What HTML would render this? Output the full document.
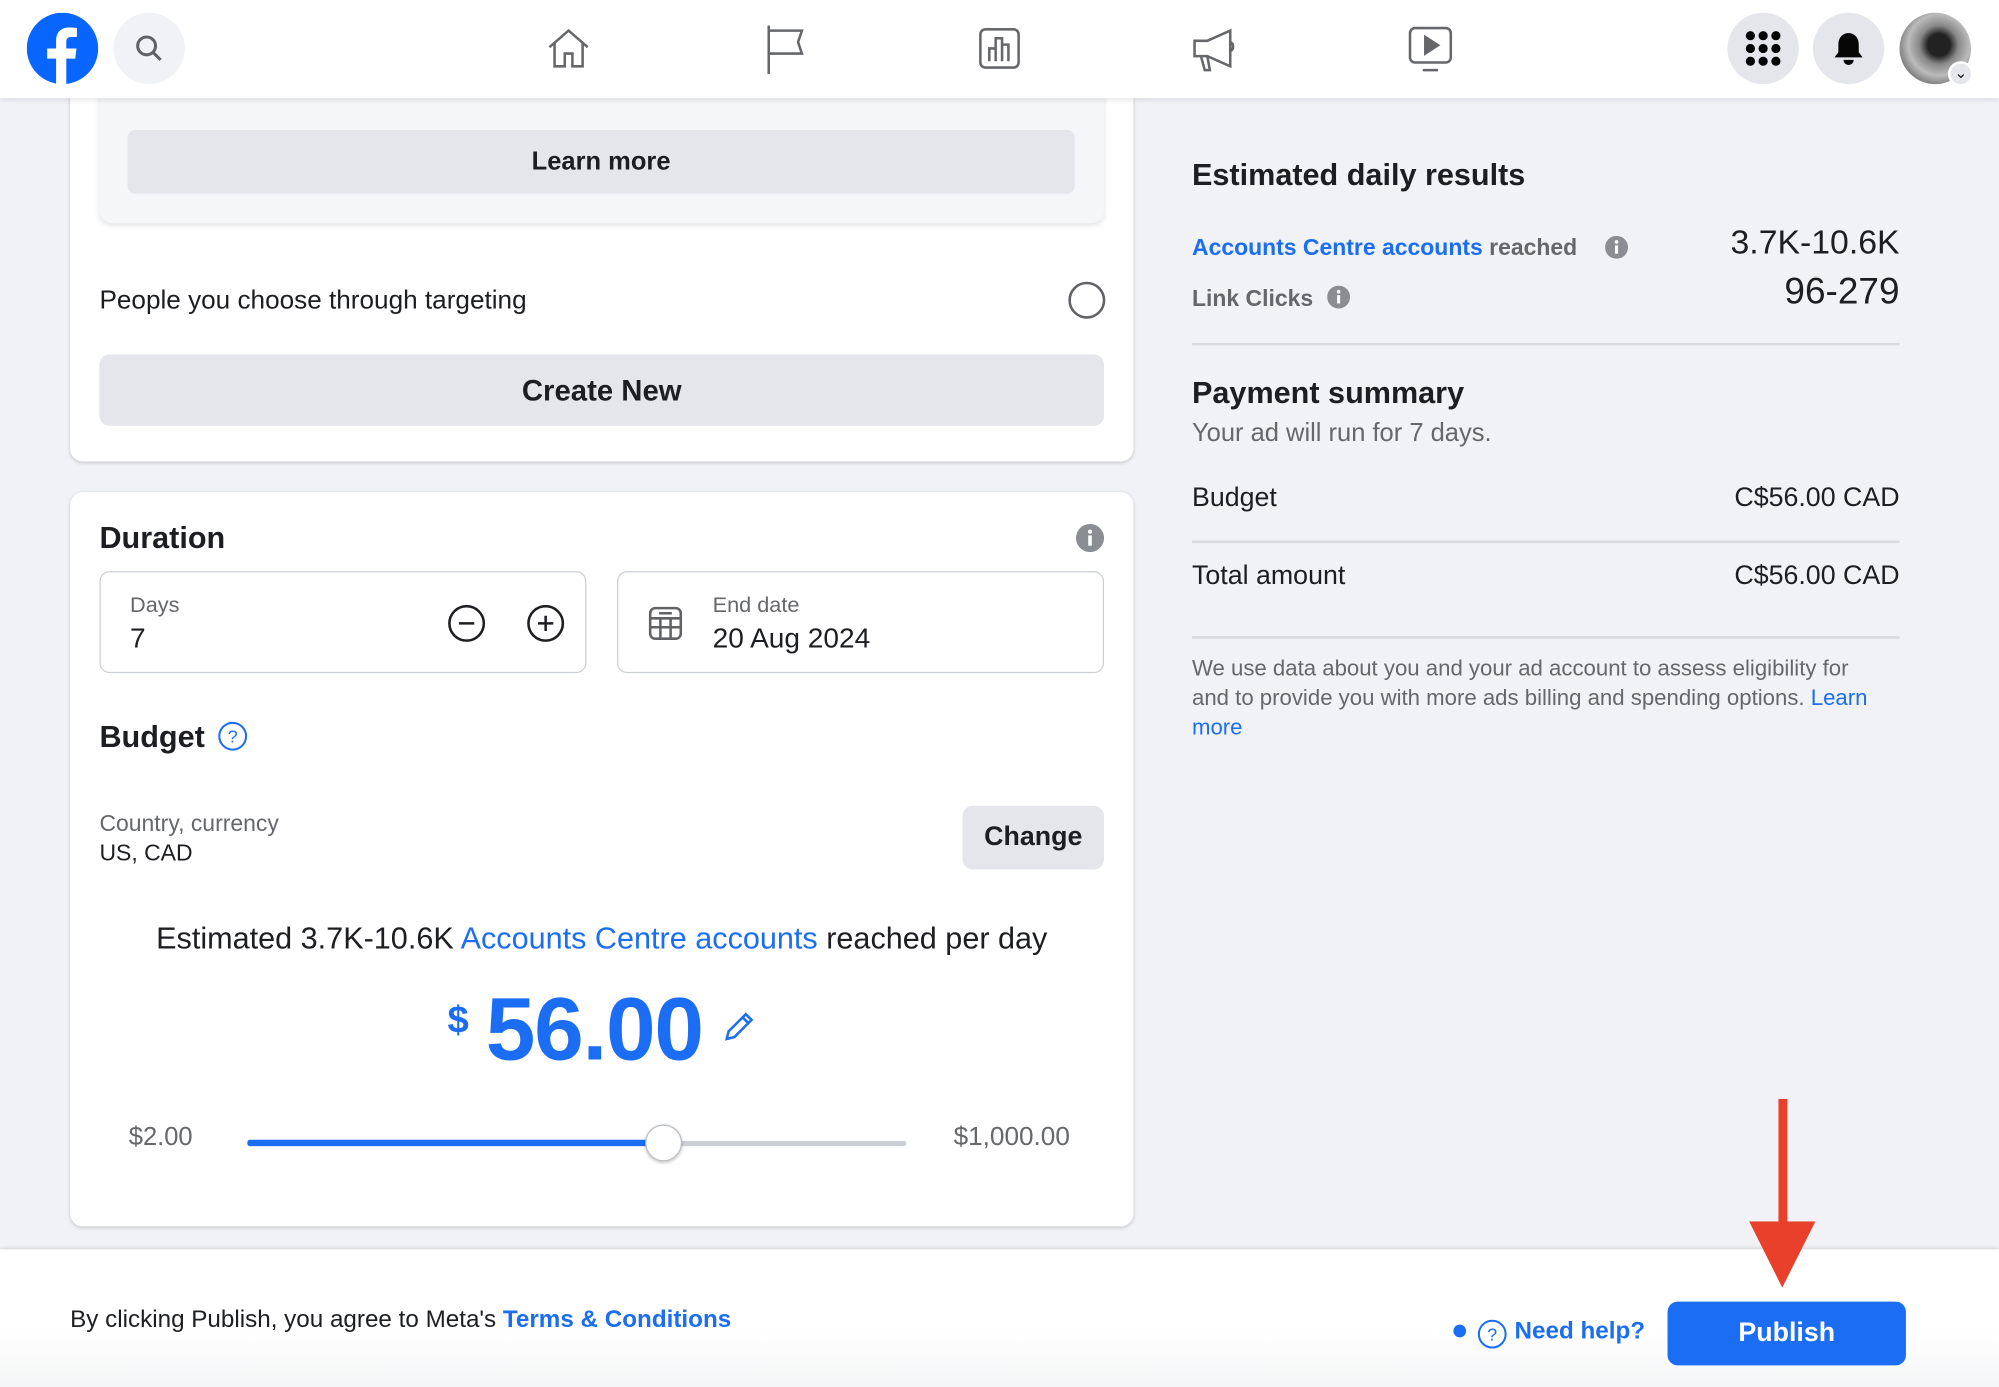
<!DOCTYPE html>
<html><head><meta charset="utf-8"><style>
*{box-sizing:border-box;margin:0;padding:0}
html,body{width:1999px;height:1387px;overflow:hidden;background:#f0f2f5;font-family:"Liberation Sans",Arial,sans-serif;color:#1c1e21}
#w{position:absolute;left:0;top:0;width:1568px;height:1088px;transform:scale(1.27487);transform-origin:0 0;background:#f0f2f5}
.a{position:absolute}
.t{position:absolute;white-space:nowrap;line-height:1}
.btn{position:absolute;background:#e4e6eb;border-radius:8px;display:flex;align-items:center;justify-content:center;font-weight:bold;color:#1c1e21}
.blue{color:#1b6ef3}
.g{color:#65676b}
.hr{position:absolute;left:935px;width:555px;height:2px;background:#d8dadf}
</style></head><body><div id="w">

<div class="a" style="left:55px;top:40px;width:834px;height:322px;background:#fff;border-radius:10px;box-shadow:0 1px 3px rgba(0,0,0,.18)"></div>
<div class="a" style="left:78px;top:40px;width:788px;height:135px;background:#f5f6f8;border-radius:0 0 10px 10px;box-shadow:0 2px 4px rgba(0,0,0,.1)"></div>
<div class="btn" style="left:100px;top:102px;width:743px;height:50px;font-size:20px;border-radius:6px">Learn more</div>
<div class="t" style="left:78px;top:226px;font-size:20.5px">People you choose through targeting</div>
<div class="a" style="left:838px;top:221px;width:29px;height:29px;border:2px solid #606266;border-radius:50%"></div>
<div class="btn" style="left:78px;top:278px;width:788px;height:56px;font-size:23px">Create New</div>

<div class="a" style="left:55px;top:386px;width:834px;height:576px;background:#fff;border-radius:10px;box-shadow:0 1px 3px rgba(0,0,0,.18)"></div>
<div class="t" style="left:78px;top:411px;font-size:24px;font-weight:bold">Duration</div>
<svg class="a" style="left:844px;top:411px" width="22" height="22"><circle cx="11" cy="11" r="11" fill="#8a8d91"/><rect x="9.6" y="9" width="2.8" height="8" fill="#fff"/><circle cx="11" cy="6" r="1.6" fill="#fff"/></svg>
<div class="a" style="left:78px;top:448px;width:382px;height:80px;border:1.5px solid #ccd0d5;border-radius:8px"></div>
<div class="t g" style="left:102px;top:466px;font-size:17px">Days</div>
<div class="t" style="left:102px;top:490px;font-size:22px">7</div>
<svg class="a" style="left:351px;top:474px" width="30" height="30" fill="none" stroke="#1c1e21" stroke-width="2"><circle cx="15" cy="15" r="13.5"/><path d="M9 15h12"/></svg>
<svg class="a" style="left:413px;top:474px" width="30" height="30" fill="none" stroke="#1c1e21" stroke-width="2"><circle cx="15" cy="15" r="13.5"/><path d="M9 15h12M15 9v12"/></svg>
<div class="a" style="left:484px;top:448px;width:382px;height:80px;border:1.5px solid #ccd0d5;border-radius:8px"></div>
<svg class="a" style="left:508px;top:475px" width="28" height="28" fill="none" stroke="#606266" stroke-width="2"><rect x="2" y="2" width="24" height="24" rx="4"/><path d="M2 10h24M2 17h24M10 10v16M18 10v16M9 6h10"/></svg>
<div class="t g" style="left:559px;top:466px;font-size:17px">End date</div>
<div class="t" style="left:559px;top:490px;font-size:22px">20 Aug 2024</div>

<div class="t" style="left:78px;top:567px;font-size:24px;font-weight:bold">Budget</div>
<svg class="a" style="left:171px;top:566px" width="23" height="23" fill="none" stroke="#1b6ef3" stroke-width="1.6"><circle cx="11.5" cy="11.5" r="10.5"/><text x="11.5" y="16.5" text-anchor="middle" font-size="14" fill="#1b6ef3" stroke="none" font-family="Liberation Sans">?</text></svg>
<div class="t g" style="left:78px;top:637px;font-size:18px">Country, currency</div>
<div class="t" style="left:78px;top:660px;font-size:18px">US, CAD</div>
<div class="btn" style="left:755px;top:632px;width:111px;height:50px;font-size:21px">Change</div>

<div class="t" style="left:472px;top:725px;font-size:24px;transform:translateX(-50%)">Estimated 3.7K-10.6K <span class="blue">Accounts Centre accounts</span> reached per day</div>
<div class="t blue" style="left:351px;top:786px;font-size:30px;font-weight:bold">$</div>
<div class="t blue" style="left:381px;top:772px;font-size:70px;font-weight:bold;letter-spacing:-1px">56.00</div>
<svg class="a" style="left:566px;top:791px" width="28" height="28" fill="none" stroke="#1b6ef3" stroke-width="2"><path d="M4 24l1.5-6L19 4.5l4.5 4.5L10 22.5z M16.5 7l4.5 4.5"/></svg>

<div class="t g" style="left:101px;top:882px;font-size:20px">$2.00</div>
<div class="a" style="left:194px;top:895px;width:517px;height:4px;background:#ccd0d5;border-radius:2px"></div>
<div class="a" style="left:194px;top:894px;width:326px;height:5px;background:#1b6ef3;border-radius:2px"></div>
<div class="a" style="left:506px;top:882px;width:29px;height:29px;background:#fff;border:1px solid #bcc0c4;border-radius:50%;box-shadow:0 1px 3px rgba(0,0,0,.25)"></div>
<div class="t g" style="left:748px;top:882px;font-size:20.5px">$1,000.00</div>

<div class="t" style="left:935px;top:126px;font-size:24px;font-weight:bold">Estimated daily results</div>
<div class="t" style="left:935px;top:185px;font-size:18px;font-weight:bold"><span class="blue">Accounts Centre accounts</span> <span class="g">reached</span></div>
<svg class="a" style="left:1259px;top:185px" width="18" height="18"><circle cx="9" cy="9" r="9" fill="#8a8d91"/><rect x="7.8" y="7.5" width="2.4" height="6.5" fill="#fff"/><circle cx="9" cy="4.8" r="1.4" fill="#fff"/></svg>
<div class="t" style="right:78px;top:177px;font-size:26.5px">3.7K-10.6K</div>
<div class="t g" style="left:935px;top:225px;font-size:18px;font-weight:bold">Link Clicks</div>
<svg class="a" style="left:1041px;top:224px" width="18" height="18"><circle cx="9" cy="9" r="9" fill="#8a8d91"/><rect x="7.8" y="7.5" width="2.4" height="6.5" fill="#fff"/><circle cx="9" cy="4.8" r="1.4" fill="#fff"/></svg>
<div class="t" style="right:78px;top:215px;font-size:29px">96-279</div>
<div class="hr" style="top:269px"></div>
<div class="t" style="left:935px;top:297px;font-size:24px;font-weight:bold">Payment summary</div>
<div class="t g" style="left:935px;top:330px;font-size:20px">Your ad will run for 7 days.</div>
<div class="t" style="left:935px;top:380px;font-size:21px">Budget</div>
<div class="t" style="right:78px;top:380px;font-size:21px">C$56.00 CAD</div>
<div class="hr" style="top:424px"></div>
<div class="t" style="left:935px;top:441px;font-size:21px">Total amount</div>
<div class="t" style="right:78px;top:441px;font-size:21px">C$56.00 CAD</div>
<div class="hr" style="top:499px"></div>
<div class="a g" style="left:935px;top:513px;width:555px;font-size:17.4px;line-height:23px">We use data about you and your ad account to assess eligibility for<br>and to provide you with more ads billing and spending options. <span class="blue">Learn<br>more</span></div>

<div class="a" style="left:0;top:980px;width:1568px;height:108px;background:linear-gradient(#fff 60%,#f4f5f6);box-shadow:0 -1px 3px rgba(0,0,0,.12)"></div>
<div class="t" style="left:55px;top:1026px;font-size:19px">By clicking Publish, you agree to Meta's <span class="blue" style="font-weight:bold">Terms &amp; Conditions</span></div>
<div class="a" style="left:1140px;top:1039px;width:10px;height:10px;border-radius:50%;background:#1b6ef3"></div>
<svg class="a" style="left:1159px;top:1035px" width="23" height="23" fill="none" stroke="#1b6ef3" stroke-width="1.6"><circle cx="11.5" cy="11.5" r="10.5"/><text x="11.5" y="16.5" text-anchor="middle" font-size="14" fill="#1b6ef3" stroke="none" font-family="Liberation Sans">?</text></svg>
<div class="t blue" style="left:1188px;top:1035px;font-size:19px;font-weight:bold">Need help?</div>
<div class="btn" style="left:1308px;top:1021px;width:187px;height:50px;background:#1b6ef3;color:#fff;font-size:21px">Publish</div>

<div class="a" style="left:1395px;top:862px;width:7px;height:100px;background:#e8402a"></div>
<svg class="a" style="left:1370px;top:958px" width="56" height="54"><path d="M2 0H54L28 52z" fill="#e8402a"/></svg>

<div class="a" style="left:0;top:0;width:1568px;height:77px;background:#fff;box-shadow:0 2px 4px rgba(0,0,0,.1)"></div>
<svg class="a" style="left:21px;top:10px" width="56" height="56"><circle cx="28" cy="28" r="28" fill="#0866ff"/><path d="M31 56V36h7l1-8h-8v-5c0-2.3.7-4 4-4h4.3v-7c-.8-.1-3.3-.4-6.2-.4-6.2 0-10.100 3.7-10.100 10.600V28h-7v8h7v20z" fill="#fff"/></svg>
<div class="a" style="left:89px;top:10px;width:56px;height:56px;border-radius:50%;background:#f0f2f5"></div>
<svg class="a" style="left:105px;top:26px" width="24" height="24" fill="none" stroke="#606266" stroke-width="2.4"><circle cx="10" cy="10" r="7"/><path d="M15 15l6 6"/></svg>
<svg class="a" style="left:428px;top:20px" width="36" height="36" fill="none" stroke="#65676b" stroke-width="2"><path d="M3 17L18 4l15 13M7 14v18h8v-10h6v10h8V14"/></svg>
<svg class="a" style="left:598px;top:18px" width="36" height="42" fill="none" stroke="#65676b" stroke-width="2"><path d="M5 2v38M5 6h26l-3 9 3 9H5"/></svg>
<svg class="a" style="left:767px;top:21px" width="34" height="34" fill="none" stroke="#65676b" stroke-width="2"><rect x="2" y="2" width="30" height="30" rx="4"/><path d="M9 27V17h5v10M14 27V9h5v18M19 27V14h5v13"/></svg>
<svg class="a" style="left:934px;top:21px" width="38" height="36" fill="none" stroke="#65676b" stroke-width="2"><path d="M3 11h10l18-8v28L13 23H3zM8 23l3 11h4l-2-11M31 12c3 1 3 6 0 7"/></svg>
<svg class="a" style="left:1104px;top:20px" width="36" height="38" fill="none" stroke="#65676b" stroke-width="2"><rect x="2" y="2" width="32" height="27" rx="4"/><path d="M14 9v13l10-6.5z" fill="#65676b"/><path d="M12 35h12"/></svg>
<div class="a" style="left:1355px;top:10px;width:56px;height:56px;border-radius:50%;background:#e4e6eb"></div>
<svg class="a" style="left:1368px;top:23px" width="30" height="30" fill="#050505"><circle cx="5" cy="5" r="3.6"/><circle cx="15" cy="5" r="3.6"/><circle cx="25" cy="5" r="3.6"/><circle cx="5" cy="15" r="3.6"/><circle cx="15" cy="15" r="3.6"/><circle cx="25" cy="15" r="3.6"/><circle cx="5" cy="25" r="3.6"/><circle cx="15" cy="25" r="3.6"/><circle cx="25" cy="25" r="3.6"/></svg>
<div class="a" style="left:1422px;top:10px;width:56px;height:56px;border-radius:50%;background:#e4e6eb"></div>
<svg class="a" style="left:1437px;top:24px" width="26" height="28" fill="#050505"><path d="M13 2c-5 0-8 4-8 9v6l-3 4h22l-3-4v-6c0-5-3-9-8-9zM9 23a4 4 0 008 0z"/></svg>
<div class="a" style="left:1490px;top:10px;width:56px;height:56px;border-radius:50%;background:radial-gradient(circle at 55% 45%,#222 0 20%,#888 35%,#bbb 55%,#666 80%)"></div>
<div class="a" style="left:1528px;top:48px;width:20px;height:20px;border-radius:50%;background:#e4e6eb;border:2px solid #fff;font-size:12px;text-align:center;line-height:15px">⌄</div>
</div></body></html>
